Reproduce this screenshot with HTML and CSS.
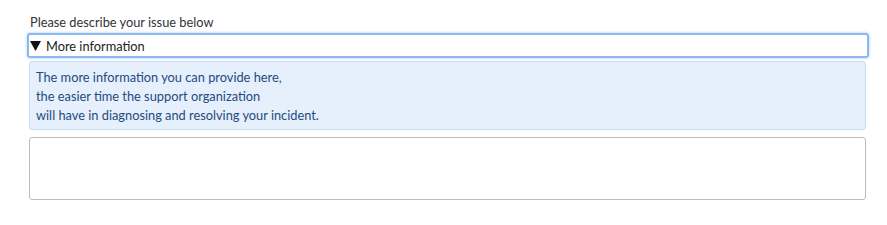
FILE: index.html
```html
<!DOCTYPE html>
<html lang="en">
<head>
    <meta charset="UTF-8">
    <title>Describe your issue</title>
    <link rel="stylesheet" href="styles.css">
</head>
<body>

<div class="field">
    <label class="field-label" for="issue">Please describe your issue below</label>

    <!-- Mais informações -->
    <details class="more-info" open>
        <summary class="more-info-toggle">
            <svg class="arrow" width="11" height="10" viewBox="0 0 11 10"><path d="M0 0H11L5.5 10Z" fill="#111"/></svg>
            More information
        </summary>
        <div class="more-info-body">
            The more information you can provide here,<br>
            the easier time the support organization<br>
            will have in diagnosing and resolving your incident.
        </div>
    </details>

    <textarea id="issue" class="field-input"></textarea>
</div>

</body>
</html>
```

FILE: styles.css
```css
* {
    margin: 0;
    padding: 0;
    box-sizing: border-box;
}

body {
    font-family: 'Lato', 'Noto Sans', sans-serif;
    font-size: 12.8px;
    color: #333;
    background: #fff;
    padding: 14px 21px 0 27px;
}

.field {
    width: 842px;
}

.field-label {
    display: block;
    line-height: 16px;
    color: #333;
    margin-left: 3px;
    margin-bottom: 3px;
}

/* Caixa "More information" */
.more-info-toggle {
    list-style: none;
    display: flex;
    align-items: center;
    height: 25px;
    padding-left: 1px;
    border: 2px solid #8bb8ef;
    border-radius: 3px;
    box-shadow: 0 0 3px rgba(100, 160, 235, 0.6);
    color: #222;
    cursor: pointer;
}

.more-info-toggle::-webkit-details-marker {
    display: none;
}

.arrow {
    margin-right: 5px;
}

.more-info-body {
    margin: 3px 3px 0 2px;
    padding: 6px 6px 4px 6px;
    background: #e5f0fc;
    border: 1px solid #c7dcf4;
    border-radius: 3px;
    color: #1f4a80;
    line-height: 19px;
}

.field-input {
    display: block;
    width: 837px;
    height: 63px;
    margin: 7px 0 0 2px;
    border: 1px solid #bdbdbd;
    border-radius: 3px;
    resize: none;
    font-family: inherit;
}
```
